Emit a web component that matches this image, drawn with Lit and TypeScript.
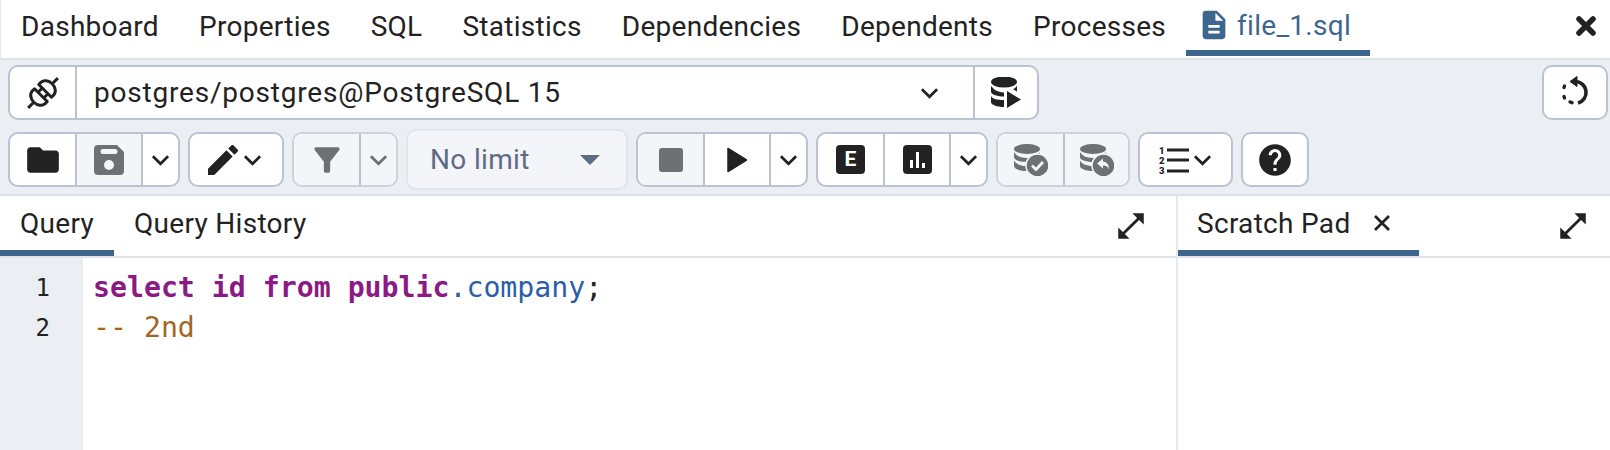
import { LitElement, html, css, svg } from "lit";
import { customElement } from "lit/decorators.js";

const chev = (cls = "") => html`<svg class="chev ${cls}" viewBox="0 0 20 12"><path d="M2 2l8 8 8-8" fill="none" stroke="currentColor" stroke-width="2.800"/></svg>`;
const mui = (d: string, cls: string) => html`<svg class=${cls} viewBox="0 0 24 24"><path fill="currentColor" d=${d}/></svg>`;
const EXPAND = "M21 11V3h-8l3.29 3.29-10 10L3 13v8h8l-3.29-3.29 10-10z";
const dbBase = svg`<ellipse cx="13" cy="5" rx="13" ry="5"/><path d="M0 8v5c0 2.600 5 5 13 5 2 0 4-.2 5.500-.5V13.200C16.800 13.700 15 14 13 14 6 14 1.500 11 0 8zM0 16.500v5.500c0 2.800 5.800 5 13 5v-5c-7 0-11.500-2.500-13-5.500zM26 8c-.6 1.400-2 2.700-4 3.700h4z"/>`;
const dbBadge = (inner: unknown) => html`<svg class="db" viewBox="0 0 34 32"><g fill="currentColor">${dbBase}<circle cx="23.500" cy="21.500" r="11.500" stroke="#f3f5f9" stroke-width="1.500"/></g>${inner}</svg>`;

@customElement("app-root")
export class AppRoot extends LitElement {
  static styles = css`
    :host { display: block; width: 1610px; height: 450px; overflow: hidden; background: #fff; color: #222; font-family: Roboto, sans-serif; }
    svg { display: block; flex: none; }
    .tabs { display: flex; height: 60px; box-sizing: border-box; border-bottom: 2px solid #dde0e6; border-left: 1px solid #e4e7ec; font-size: 28px; letter-spacing: .28px; }
    .tab { display: flex; align-items: center; height: 52px; padding: 0 20px; white-space: nowrap; }
    .tab.active { color: #3d668f; border-bottom: 6px solid #3d668f; height: 56px; padding: 0 0 0 20px; width: 184px; box-sizing: border-box; gap: 6px; }
    .ficon { width: 34px; height: 34px; margin-left: -9px; }
    .closeall { margin-left: auto; margin-right: 7px; align-self: center; width: 34px; height: 34px; margin-top: -6px; }
    .toolbar { background: #ebeef3; border-bottom: 2px solid #dde0e6; padding: 5px 2px 0 8px; display: flex; flex-direction: column; box-sizing: border-box; height: 136px; }
    .row { display: flex; align-items: center; gap: 8px; }
    .row.r1 { height: 55px; margin-bottom: 9px; }
    .row.r2 { height: 61px; }
    .group { display: flex; height: 55px; box-sizing: border-box; border: 2px solid #bcc3d0; border-radius: 10px; background: #fff; overflow: hidden; }
    .group.fill { width: 1031px; }
    .group.end { margin-left: auto; }
    .b { display: flex; align-items: center; justify-content: center; height: 100%; box-sizing: border-box; color: #222; flex: none; }
    .b + .b { border-left: 2px solid #bcc3d0; }
    .b.off { background: #f3f5f9; color: #6f7073; }
    .w65 { width: 65px; } .w66 { width: 66px; } .w64 { width: 64px; } .w37 { width: 37px; } .w92 { width: 92px; } .w91 { width: 91px; } .w62 { width: 62px; }
    .group.off { border-color: #ccd2dc; }
    .chev { width: 19px; height: 12px; }
    .conn { flex: 1; justify-content: space-between; padding: 0 34px 0 17px; font-size: 28px; letter-spacing: .8px; min-width: 0; }
    .combo { width: 222px; height: 61px; box-sizing: border-box; border: 2px solid #e1e5ec; border-radius: 10px; background: #f3f5f9; color: #5f6b85; display: flex; align-items: center; justify-content: space-between; padding: 0 26px 0 22px; font-size: 28px; letter-spacing: .33px; flex: none; }
    .tri { width: 0; height: 0; border-left: 10px solid transparent; border-right: 10px solid transparent; border-top: 10px solid #5f6b85; }
    .pen { padding-right: 8px; gap: 0; }
    .i38 { width: 38px; height: 38px; }
    .i40 { width: 40px; height: 40px; }
    .i36 { width: 36px; height: 36px; }
    .db { width: 34px; height: 32px; }
    .etxt { width: 29px; height: 29px; border-radius: 4px; background: #222; color: #fff; font: 700 21px/29px Roboto, sans-serif; text-align: center; }
    .macro { gap: 1px; }
    .split { display: flex; height: 254px; }
    .left { width: 1176px; flex: none; display: flex; flex-direction: column; }
    .right { flex: 1; border-left: 2px solid #e6e8ef; display: flex; flex-direction: column; }
    .ptabs { display: flex; align-items: stretch; height: 62px; box-sizing: border-box; border-bottom: 2px solid #e2e4ea; font-size: 28px; letter-spacing: .3px; }
    .ptab { display: flex; align-items: center; padding: 0 20px 6px; box-sizing: border-box; height: 60px; white-space: nowrap; gap: 20px; }
    .ptab.active { border-bottom: 6px solid #3d668f; padding-bottom: 0; }
    .ptab.first { width: 114px; }
    .ptab.sp { width: 241px; padding-left: 19px; }
    .x { width: 24px; height: 24px; }
    .exp { margin-left: auto; align-self: center; width: 34px; height: 34px; }
    .left .exp { margin-right: 28px; }
    .right .exp { margin-right: 20px; }
    .editor { flex: 1; display: flex; min-height: 0; }
    .gutter { width: 83px; background: #ebeef3; box-sizing: border-box; padding: 10px 33px 0 0; text-align: right; font-family: "DejaVu Sans Mono", monospace; font-size: 24px; flex: none; }
    .ln { height: 40px; line-height: 40px; }
    .code { padding: 10px 0 0 10px; white-space: pre; font-family: "DejaVu Sans Mono", monospace; font-size: 28.2px; }
    .kw { color: #8b1a85; font-weight: 700; }
    .tb { color: #2a5ea8; }
    .cm { color: #a5651f; }
  `;

  render() {
    return html`
      <div class="tabs">
        ${["Dashboard", "Properties", "SQL", "Statistics", "Dependencies", "Dependents", "Processes"].map((t) => html`<div class="tab">${t}</div>`)}
        <div class="tab active">${mui("M14 2H6c-1.100 0-1.990.9-1.990 2L4 20c0 1.100.89 2 1.990 2H18c1.100 0 2-.9 2-2V8l-6-6zm2 16H8v-2h8v2zm0-4H8v-2h8v2zm-3-5V3.500L18.500 9H13z", "ficon")}file_1.sql</div>
        <svg class="closeall" viewBox="0 0 34 34"><path d="M10 10l14 14M24 10L10 24" stroke="#222" stroke-width="5.500" stroke-linecap="round"/></svg>
      </div>

      <div class="toolbar">
        <div class="row r1">
          <div class="group fill">
            <div class="b w65"><svg width="36" height="36" viewBox="0 0 36 36"><g transform="rotate(45 18 18)" fill="none" stroke="#222" stroke-width="3" stroke-linejoin="round"><path d="M9 15v-3a9 7 0 0 1 18 0v3z"/><path d="M18 5V-3"/><path d="M9 21v3a9 7 0 0 0 18 0v-3z"/><path d="M18 31v8"/><path d="M14 15v6M22 15v6"/></g></svg></div>
            <div class="b conn"><span>postgres/postgres@PostgreSQL 15</span>${chev()}</div>
            <div class="b w64"><svg class="db" viewBox="0 0 32 32"><g fill="#222"><ellipse cx="14" cy="5" rx="13" ry="5.500"/><path d="M1 8.500v6c0 2.600 5 5 13 5V15.500C7 15.500 2.500 11.500 1 8.500zM27 8.500c-.6 1.400-2 2.700-4 3.700l4 2.300zM1 19v6c0 2.800 5.800 5 13 5V23C7 23 2.500 22 1 19z"/><path d="M17 14v17L31 22.500z"/></g></svg></div>
          </div>
          <div class="group end"><div class="b w62"><svg class="i36" viewBox="0 0 36 36" fill="none" stroke="#222"><path d="M18 6.500A11 11 0 0 1 21 28.100" stroke-width="3.600"/><path d="M7.500 11l-.5 1.500M7 21.500l.5 1.500M13 27l2 .7" stroke-linecap="round" stroke-width="3.400"/><path d="M13 6.500l7-5v10z" fill="#222" stroke="#222" stroke-width="1" stroke-linejoin="round"/></svg></div></div>
        </div>

        <div class="row r2">
          <div class="group">
            <div class="b w65">${mui("M10 4H4c-1.100 0-1.990.9-1.990 2L2 18c0 1.100.9 2 2 2h16c1.100 0 2-.9 2-2V8c0-1.100-.9-2-2-2h-8l-2-2z", "i38")}</div>
            <div class="b w66 off"><svg width="30" height="30" viewBox="0 0 30 30"><path fill="currentColor" fill-rule="evenodd" d="M4 0h19l7 7v19a4 4 0 0 1-4 4H4a4 4 0 0 1-4-4V4a4 4 0 0 1 4-4zM9 4a2.500 2.500 0 0 0 0 5h12a2.500 2.500 0 0 0 0-5zM15 15a5 5 0 1 0 0 10 5 5 0 0 0 0-10z"/></svg></div>
            <div class="b w37">${chev()}</div>
          </div>
          <div class="group">
            <div class="b w92 pen">${mui("M3 17.250V21h3.750L17.810 9.940l-3.750-3.750L3 17.250zM20.710 7.040c.39-.39.39-1.020 0-1.410l-2.340-2.340c-.39-.39-1.020-.39-1.410 0l-1.830 1.830 3.750 3.750 1.830-1.830z", "i40")}${chev()}</div>
          </div>
          <div class="group off">
            <div class="b w65 off">${mui("M4.250 5.610C6.270 8.200 10 13 10 13v6c0 .55.45 1 1 1h2c.55 0 1-.45 1-1v-6s3.720-4.800 5.740-7.390C20.250 4.950 19.780 4 18.950 4H5.040c-.83 0-1.300.95-.79 1.610z", "i38")}</div>
            <div class="b w37 off">${chev()}</div>
          </div>
          <div class="combo"><span>No limit</span><div class="tri"></div></div>
          <div class="group">
            <div class="b w65 off"><svg width="24" height="24" viewBox="0 0 24 24"><rect width="24" height="24" rx="3" fill="currentColor"/></svg></div>
            <div class="b w66"><svg width="20" height="26" viewBox="0 0 20 26"><path d="M1 1.500v23L19.500 13z" fill="#222" stroke="#222" stroke-width="1.500" stroke-linejoin="round"/></svg></div>
            <div class="b w37">${chev()}</div>
          </div>
          <div class="group">
            <div class="b w65"><div class="etxt">E</div></div>
            <div class="b w66"><svg width="29" height="29" viewBox="0 0 29 29"><rect width="29" height="29" rx="4" fill="#222"/><path d="M7 15h3v8H7zM13 7h3v16h-3zM19 18h3v5h-3z" fill="#fff"/></svg></div>
            <div class="b w37">${chev()}</div>
          </div>
          <div class="group off">
            <div class="b w65 off">${dbBadge(svg`<path d="M18 21.500l4 4 7-7.500" fill="none" stroke="#f3f5f9" stroke-width="2.800"/>`)}</div>
            <div class="b w65 off">${dbBadge(svg`<path d="M23 14.500l-6 5 6 5v-3c3 0 5 1 6 4 .3-4.500-2-7.500-6-8z" fill="#f3f5f9"/>`)}</div>
          </div>
          <div class="group">
            <div class="b w91 macro">
              <svg width="33" height="32" viewBox="0 0 33 32"><g font-family="Roboto, sans-serif" font-weight="900" font-size="9.500" fill="#222"><text x="0" y="10">1</text><text x="0" y="20">2</text><text x="0" y="30">3</text></g><path d="M8 6h22M8 16h22M8 27h22" stroke="#222" stroke-width="3"/></svg>
              ${chev()}
            </div>
          </div>
          <div class="group">
            <div class="b w64">${mui("M12 2C6.480 2 2 6.480 2 12s4.480 10 10 10 10-4.480 10-10S17.520 2 12 2zm1 17h-2v-2h2v2zm2.070-7.750l-.9.920C13.450 12.900 13 13.500 13 15h-2v-.5c0-1.100.45-2.100 1.170-2.830l1.240-1.260c.37-.36.590-.86.590-1.410 0-1.100-.9-2-2-2s-2 .9-2 2H8c0-2.210 1.790-4 4-4s4 1.790 4 4c0 .88-.36 1.680-.93 2.250z", "i38")}</div>
          </div>
        </div>
      </div>

      <div class="split">
        <div class="left">
          <div class="ptabs">
            <div class="ptab active first">Query</div>
            <div class="ptab">Query History</div>
            ${mui(EXPAND, "exp")}
          </div>
          <div class="editor">
            <div class="gutter"><div class="ln">1</div><div class="ln">2</div></div>
            <div class="code"><div class="ln"><span class="kw">select</span> <span class="kw">id</span> <span class="kw">from</span> <span class="kw">public</span><span class="tb">.company</span>;</div><div class="ln cm">-- 2nd</div></div>
          </div>
        </div>
        <div class="right">
          <div class="ptabs">
            <div class="ptab active sp">Scratch Pad<svg class="x" viewBox="0 0 24 24"><path d="M5 5l14 14M19 5L5 19" stroke="#222" stroke-width="2.800"/></svg></div>
            ${mui(EXPAND, "exp")}
          </div>
        </div>
      </div>
    `;
  }
}
